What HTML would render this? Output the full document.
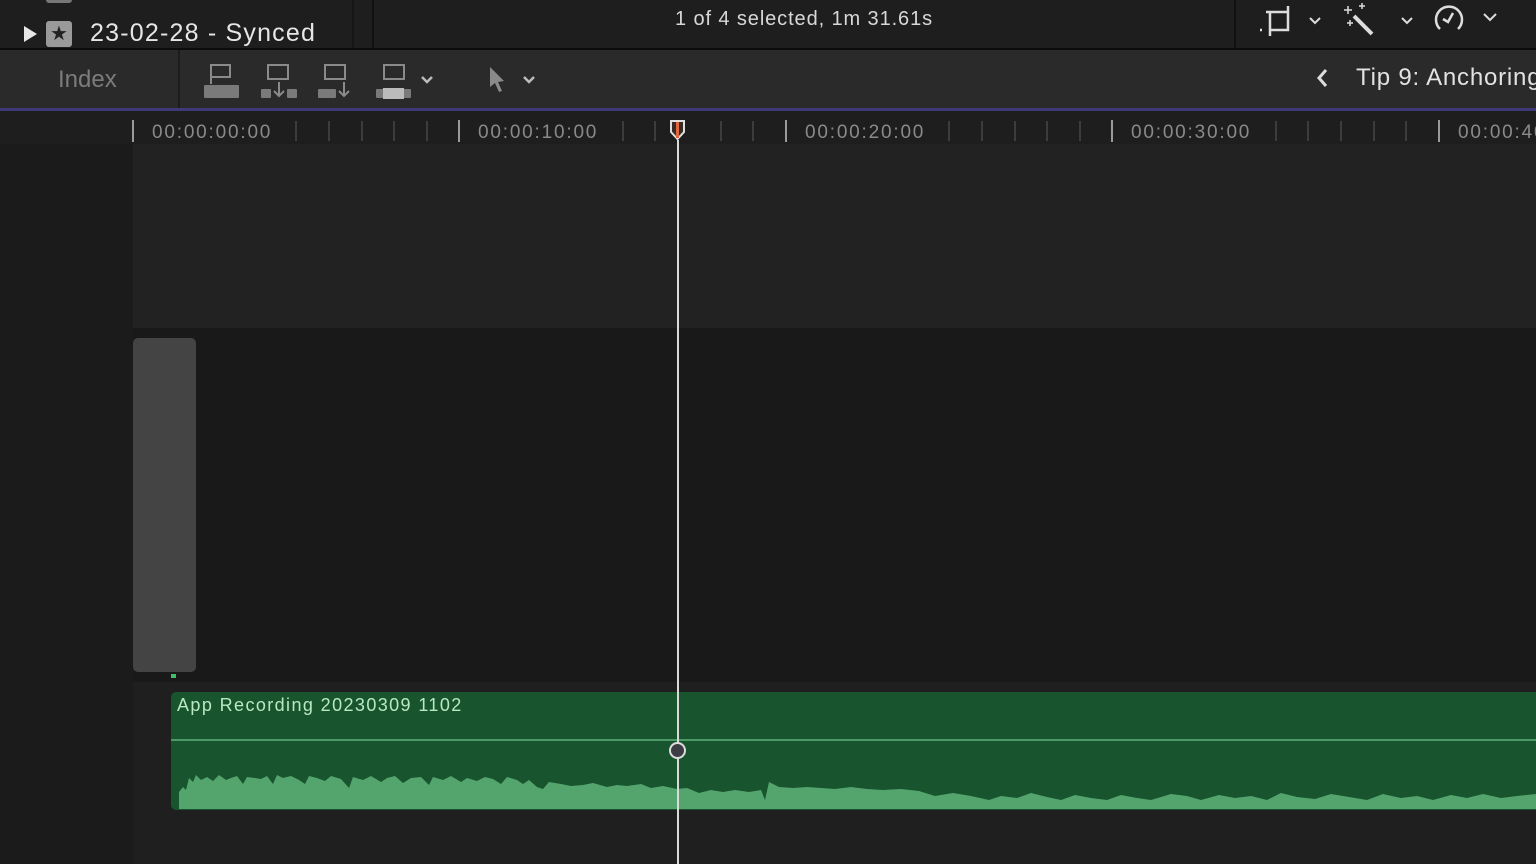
<!DOCTYPE html>
<html><head><meta charset="utf-8"><style>
*{margin:0;padding:0;box-sizing:border-box}
body{width:1536px;height:864px;background:#1b1b1b;font-family:"Liberation Sans",sans-serif;position:relative;overflow:hidden}
.a{position:absolute}
</style></head><body>
<div class="a" style="left:0;top:0;width:1536px;height:48px;background:#1e1e1e"></div>
<div class="a" style="left:352px;top:0;width:2px;height:48px;background:#161616"></div>
<div class="a" style="left:372px;top:0;width:2px;height:48px;background:#111"></div>
<div class="a" style="left:1234px;top:0;width:2px;height:48px;background:#111"></div>
<div class="a" style="left:46px;top:0;width:26px;height:3px;background:#777;border-radius:0 0 3px 3px"></div>
<div class="a" style="left:24px;top:26px;width:0;height:0;border-left:13px solid #e8e8e8;border-top:8px solid transparent;border-bottom:8px solid transparent"></div>
<div class="a" style="left:46px;top:21px;width:26px;height:26px;background:#9a9a9a;border-radius:3px;color:#222;font-size:20px;text-align:center;line-height:26px">★</div>
<div class="a" style="left:90px;top:19px;color:#e6e6e6;font-size:25px;letter-spacing:1.2px">23-02-28 - Synced</div>
<div class="a" style="left:675px;top:8px;color:#d8d8d8;font-size:20px;letter-spacing:0.9px">1 of 4 selected, 1m 31.61s</div>
<svg class="a" style="left:1250px;top:0" width="286" height="48" fill="none" stroke="#ddd" stroke-width="2.5">
 <path d="M16 12 H38 M38 6 V30 H20 M20 12 V36 M10 30 H12"/>
 <path d="M60 18 l5 5 5-5" stroke-width="2"/>
 <path d="M122 34 L104 16" stroke-width="4"/>
 <path d="M98 6v8M94 10h8M112 3v6M109 6h6M100 20v6M97 23h6" stroke-width="1.5"/>
 <path d="M152 18 l5 5 5-5" stroke-width="2"/>
 <path d="M190 29 A13 13 0 1 1 208 29" /><path d="M193 19 L198 22 L203 13"/>
 <path d="M234 14 l6 6 6-6" stroke-width="2"/>
</svg>
<div class="a" style="left:0;top:48px;width:1536px;height:2px;background:#0c0c0c"></div>
<div class="a" style="left:0;top:50px;width:1536px;height:58px;background:#2a2a2a"></div>
<div class="a" style="left:178px;top:50px;width:2px;height:58px;background:#1c1c1c"></div>
<div class="a" style="left:58px;top:66px;color:#7c7c7c;font-size:24px">Index</div>
<svg class="a" style="left:200px;top:60px" width="350" height="42" fill="none" stroke="#8a8a8a" stroke-width="2">
 <path d="M11 24 V5 H30 V17 H11"/><rect x="4" y="25" width="35" height="13" fill="#7a7a7a" stroke="none" rx="1"/>
 <rect x="68" y="5" width="20" height="14"/><rect x="61" y="29" width="10" height="9" fill="#7a7a7a" stroke="none" rx="1"/><rect x="87" y="29" width="10" height="9" fill="#7a7a7a" stroke="none" rx="1"/><path d="M79 22 V36 M74 31 l5 5 5-5"/>
 <rect x="125" y="5" width="20" height="14"/><rect x="118" y="29" width="18" height="9" fill="#7a7a7a" stroke="none" rx="1"/><path d="M144 22 V36 M139 31 l5 5 5-5"/>
 <rect x="184" y="5" width="20" height="14"/><rect x="176" y="29" width="35" height="9" fill="#7a7a7a" stroke="none" rx="1"/><rect x="183" y="28" width="21" height="11" fill="#bbb" stroke="none"/>
 <path d="M222 17 l5 5 5-5" stroke="#bbb" stroke-width="2.5"/>
 <path d="M290 7 L304 21 L298 22 L302 31 L299 32 L295 23 L290 27 Z" fill="#8a8a8a" stroke="none"/>
 <path d="M324 17 l5 5 5-5" stroke="#bbb" stroke-width="2.5"/>
</svg>
<svg class="a" style="left:1310px;top:66px" width="24" height="24" fill="none" stroke="#ddd" stroke-width="3"><path d="M16 4 L9 12 L16 20"/></svg>
<div class="a" style="left:1356px;top:64px;color:#e2e2e2;font-size:24px;white-space:nowrap;letter-spacing:0.8px">Tip 9: Anchoring</div>
<div class="a" style="left:0;top:108px;width:1536px;height:3px;background:#3e3a7a"></div>
<div class="a" style="left:0;top:111px;width:1536px;height:33px;background:#1e1e1e"></div>
<svg class="a" style="left:0;top:111px" width="1536" height="33" font-family="Liberation Sans" font-size="19" fill="#8a8a8a" letter-spacing="1.8">
 <g stroke="#9a9a9a" stroke-width="2"><path d="M133 9v22M459 9v22M786 9v22M1112 9v22M1439 9v22"/></g>
 <g stroke="#3c3c3c" stroke-width="2"><path d="M296 10v20M329 10v20M362 10v20M394 10v20M427 10v20M623 10v20M655 10v20M721 10v20M753 10v20M949 10v20M982 10v20M1015 10v20M1047 10v20M1080 10v20M1276 10v20M1308 10v20M1341 10v20M1374 10v20M1406 10v20"/></g>
 <text x="152" y="27">00:00:00:00</text><text x="478" y="27">00:00:10:00</text><text x="805" y="27">00:00:20:00</text><text x="1131" y="27">00:00:30:00</text><text x="1458" y="27">00:00:40:00</text>
</svg>
<div class="a" style="left:133px;top:144px;width:1403px;height:184px;background:#222"></div>
<div class="a" style="left:133px;top:328px;width:1403px;height:354px;background:#191919"></div>
<div class="a" style="left:133px;top:682px;width:1403px;height:182px;background:#1f1f1f"></div>
<div class="a" style="left:133px;top:338px;width:63px;height:334px;background:#444;border-radius:5px"></div>
<div class="a" style="left:171px;top:674px;width:5px;height:4px;background:#3fbf6a"></div>
<div class="a" style="left:171px;top:692px;width:1370px;height:118px;background:#18542e;border-radius:5px 0 0 5px"></div>
<div class="a" style="left:171px;top:739px;width:1365px;height:2px;background:#4d9a66"></div>
<div class="a" style="left:177px;top:695px;color:#b9e8c4;font-size:18px;letter-spacing:1.4px">App Recording 20230309 1102</div>
<svg class="a" style="left:171px;top:692px" width="1365" height="118">
<path fill="#54a46d" d="M8 117 L8 100 L12 95 L15 98 L18 86 L22 90 L25 83 L30 88 L36 85 L42 89 L48 83 L55 88 L60 86 L66 84 L72 92 L76 85 L84 86 L90 87 L96 84 L102 92 L106 83 L112 86 L120 84 L128 88 L134 92 L138 84 L146 86 L154 89 L160 84 L170 87 L178 96 L182 85 L192 88 L200 84 L210 90 L216 86 L224 84 L232 91 L240 86 L250 85 L258 93 L262 85 L272 88 L280 84 L290 90 L296 86 L306 89 L314 85 L322 87 L330 92 L336 85 L346 88 L352 92 L358 88 L366 95 L372 97 L378 90 L390 92 L400 94 L412 93 L422 91 L436 95 L446 93 L456 94 L470 92 L480 96 L492 94 L506 97 L516 96 L528 101 L540 98 L552 100 L564 98 L578 100 L590 98 L594 108 L598 90 L608 95 L622 96 L636 95 L650 96 L664 97 L680 95 L696 97 L712 98 L730 97 L748 99 L764 104 L782 101 L800 104 L818 108 L830 104 L846 106 L860 101 L876 105 L890 108 L904 103 L920 106 L936 108 L950 103 L966 106 L980 108 L1000 102 L1016 104 L1030 108 L1048 103 L1064 106 L1080 104 L1096 108 L1110 101 L1126 105 L1144 107 L1160 102 L1178 105 L1196 108 L1212 102 L1230 106 L1246 104 L1262 108 L1280 103 L1296 106 L1312 102 L1330 106 L1346 104 L1365 102 L1365 117 Z"/>
</svg>
<div class="a" style="left:677px;top:140px;width:2px;height:724px;background:#d9d9d9"></div>
<svg class="a" style="left:668px;top:119px" width="20" height="24"><path d="M3 2 H16 V13 L9.5 20 L3 13 Z" fill="#3a2a28" stroke="#e0e0e0" stroke-width="2"/><path d="M9.5 3 V19" stroke="#e0683c" stroke-width="3"/></svg>
<div class="a" style="left:669px;top:742px;width:17px;height:17px;border-radius:50%;background:#3c3c44;border:2px solid #ddd"></div>
</body></html>
